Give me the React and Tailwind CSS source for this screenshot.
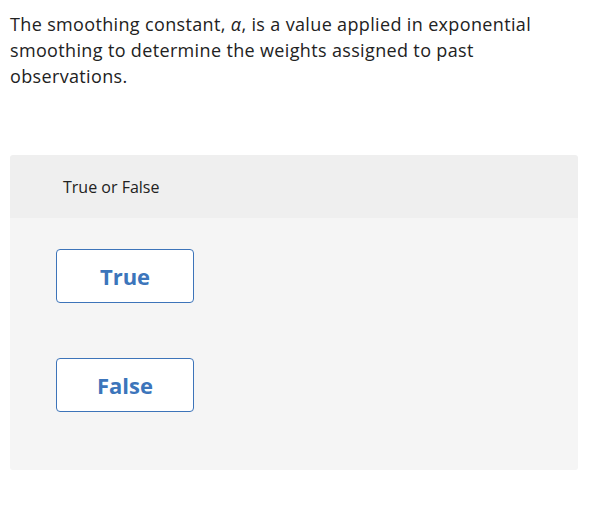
import React from 'react';

const Choice = ({ label }) => (
  <button className="w-[138px] h-[54px] bg-white border border-[#3d74b9] rounded-[4px] text-[#3c75bb] text-[22px] font-bold font-['Open_Sans',sans-serif] leading-[48px]">
    {label}
  </button>
);

const App = () => {
  return (
    <div className="w-[591px] h-[524px] bg-white font-['Open_Sans',sans-serif] text-[#222]">
      {/* Question */}
      <p className="w-[560px] pl-[10px] pt-[11px] text-[18px] leading-[26px] tracking-[0.35px]">
        The smoothing constant, <i>α</i>, is a value applied in exponential smoothing to determine the weights assigned to past observations.
      </p>

      {/* Answer card */}
      <div className="mt-[66px] mx-[10px] w-[568px] rounded-[3px] overflow-hidden">
        <div className="h-[63px] bg-[#efefef] flex items-center pl-[53px] text-[16px] text-[#222]">
          True or False
        </div>
        <div className="h-[252px] bg-[#f5f5f5] pl-[46px] pt-[31px] flex flex-col gap-[55px]">
          <Choice label="True" />
          <Choice label="False" />
        </div>
      </div>
    </div>
  );
};

export default App;
